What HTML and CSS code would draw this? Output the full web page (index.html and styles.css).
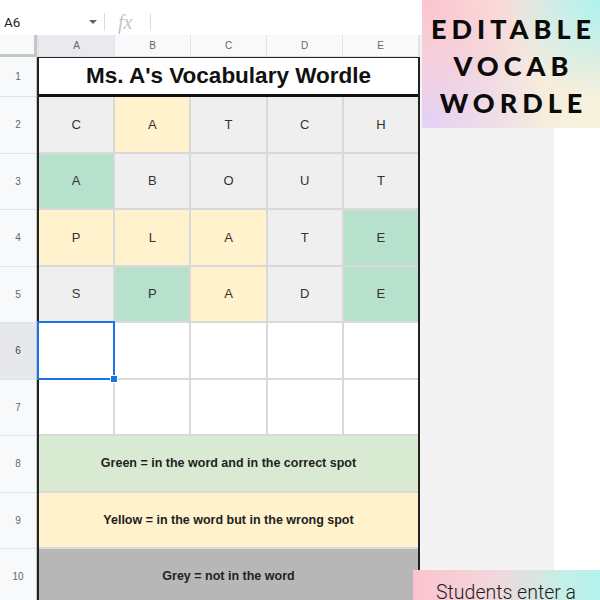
FILE: index.html
```html
<!DOCTYPE html>
<html>
<head>
<meta charset="utf-8">
<link rel="stylesheet" href="styles.css">
</head>
<body>
<div class="page">
  <div class="topbar">
    <div class="namebox"><span class="ref">A6</span><span class="caret"></span></div>
    <div class="sep"></div>
    <div class="fx">fx</div>
    <div class="sep"></div>
  </div>
  <div class="main">
    <div class="sheet">
      <div class="colheads">
        <div class="corner"></div>
        <div class="letters">
          <div class="ch sel">A</div>
          <div class="ch">B</div>
          <div class="ch">C</div>
          <div class="ch">D</div>
          <div class="ch">E</div>
        </div>
      </div>
      <div class="body">
        <div class="rowheads">
          <div class="rh first">1</div>
          <div class="rh">2</div>
          <div class="rh">3</div>
          <div class="rh">4</div>
          <div class="rh">5</div>
          <div class="rh sel">6</div>
          <div class="rh">7</div>
          <div class="rh">8</div>
          <div class="rh">9</div>
          <div class="rh">10</div>
        </div>
        <div class="data">
          <div class="title">Ms. A's Vocabulary Wordle</div>
          <div class="grid">
            <div class="cell g">C</div><div class="cell y">A</div><div class="cell g">T</div><div class="cell g">C</div><div class="cell g">H</div>
            <div class="cell k">A</div><div class="cell g">B</div><div class="cell g">O</div><div class="cell g">U</div><div class="cell g">T</div>
            <div class="cell y">P</div><div class="cell y">L</div><div class="cell y">A</div><div class="cell g">T</div><div class="cell k">E</div>
            <div class="cell g">S</div><div class="cell k">P</div><div class="cell y">A</div><div class="cell g">D</div><div class="cell k">E</div>
            <div class="cell w active"><span class="handle"></span></div><div class="cell w"></div><div class="cell w"></div><div class="cell w"></div><div class="cell w"></div>
            <div class="cell w"></div><div class="cell w"></div><div class="cell w"></div><div class="cell w"></div><div class="cell w"></div>
            <div class="legend lg">Green = in the word and in the correct spot</div>
            <div class="legend ly">Yellow = in the word but in the wrong spot</div>
            <div class="legend lk">Grey = not in the word</div>
          </div>
        </div>
      </div>
    </div>
    <div class="side"></div>
    <div class="blank"></div>
  </div>
  <div class="promo">EDITABLE<br>VOCAB<br>WORDLE</div>
  <div class="promo2">Students enter a</div>
</div>
</body>
</html>
```

FILE: styles.css
```css
html, body {
  margin: 0;
  padding: 0;
  background: #ffffff;
}
.page {
  position: relative;
  width: 600px;
  height: 600px;
  overflow: hidden;
  font-family: "Liberation Sans", Arial, sans-serif;
  color: #222;
}
.topbar {
  height: 35px;
  box-sizing: border-box;
  padding-top: 9px;
  display: flex;
  align-items: center;
  background: #fff;
}
.namebox {
  width: 104px;
  display: flex;
  align-items: center;
  justify-content: space-between;
  box-sizing: border-box;
  padding: 0 7px 0 4px;
}
.ref {
  font-family: Roboto, "Liberation Sans", sans-serif;
  font-size: 13.5px;
  color: #222;
}
.caret {
  width: 0;
  height: 0;
  border-left: 4px solid transparent;
  border-right: 4px solid transparent;
  border-top: 4px solid #5f6368;
}
.sep {
  width: 1px;
  height: 18px;
  background: #dadce0;
}
.fx {
  width: 45px;
  box-sizing: border-box;
  padding-left: 13px;
  font-family: "Liberation Serif", serif;
  font-style: italic;
  font-size: 20px;
  color: #c4c4c4;
  line-height: 18px;
}
.main {
  display: flex;
  height: 565px;
}
.sheet {
  width: 420px;
  flex: none;
  background: #fff;
}
.side {
  width: 134px;
  background: #f3f3f3;
  flex: none;
}
.blank {
  flex: 1;
  background: #fff;
}
.colheads {
  display: flex;
  height: 22px;
}
.corner {
  width: 37px;
  height: 22px;
  box-sizing: border-box;
  background: #f8f9fa;
  border-right: 3px solid #c4c7c5;
  border-bottom: 3px solid #c4c7c5;
  flex: none;
}
.letters {
  flex: 1;
  display: grid;
  grid-template-columns: repeat(5, 1fr);
  padding: 0 2px;
  column-gap: 1px;
  background: #e1e3e6;
  border-bottom: 1px solid #e1e3e6;
  box-sizing: border-box;
}
.ch {
  background: #f8f9fa;
  font-size: 10px;
  color: #666;
  display: flex;
  align-items: center;
  justify-content: center;
}
.ch.sel {
  background: #e8eaed;
}
.body {
  display: flex;
}
.rowheads {
  width: 37px;
  flex: none;
  background: #f8f9fa;
  box-sizing: border-box;
  border-right: 1px solid #c7c7c7;
}
.rh {
  height: 56.5px;
  box-sizing: border-box;
  border-bottom: 1px solid #e1e3e6;
  display: flex;
  align-items: center;
  justify-content: center;
  font-size: 10px;
  color: #666;
}
.rh.first {
  height: 40px;
}
.rh.sel {
  background: #e6e8eb;
  color: #444;
}
.data {
  flex: 1;
  box-sizing: border-box;
  border-left: 2px solid #222;
  border-right: 2px solid #222;
}
.title {
  height: 40px;
  box-sizing: border-box;
  border-top: 1px solid #222;
  border-bottom: 3px solid #111;
  display: flex;
  align-items: center;
  justify-content: center;
  font-weight: bold;
  font-size: 22.5px;
  color: #111;
  background: #fff;
}
.grid {
  display: grid;
  grid-template-columns: repeat(5, 1fr);
  grid-auto-rows: 54.5px;
  gap: 2px;
  background: #d9d9d9;
}
.cell {
  display: flex;
  align-items: center;
  justify-content: center;
  font-size: 13px;
  color: #333;
  position: relative;
}
.cell.g { background: #efefef; }
.cell.y { background: #fff2cc; }
.cell.k { background: #b7e1cd; }
.cell.w { background: #ffffff; }
.cell.active {
  outline: 2px solid #1a73e8;
  outline-offset: 0px;
  z-index: 1;
}
.handle {
  position: absolute;
  right: -5px;
  bottom: -5px;
  width: 6px;
  height: 6px;
  background: #1a73e8;
  border: 1px solid #fff;
}
.legend {
  grid-column: 1 / span 5;
  display: flex;
  align-items: center;
  justify-content: center;
  font-weight: bold;
  font-size: 12.5px;
  color: #222;
}
.legend.lg { background: #d9ead3; }
.legend.ly { background: #fff2cc; }
.legend.lk { background: #b7b7b7; }
.promo {
  position: absolute;
  left: 422px;
  top: 0;
  width: 178px;
  height: 128px;
  box-sizing: border-box;
  padding-top: 10px;
  padding-left: 5px;
  text-align: center;
  font-family: Lato, "Open Sans", sans-serif;
  font-weight: 900;
  font-size: 27px;
  line-height: 37px;
  letter-spacing: 5px;
  color: #0b0b0b;
  background:
    radial-gradient(circle at 100% 0%, rgba(170, 243, 240, 0.95) 0, rgba(170, 243, 240, 0) 45%),
    radial-gradient(circle at 0% 0%, rgba(252, 196, 206, 1) 0, rgba(252, 196, 206, 0) 55%),
    radial-gradient(circle at 0% 90%, rgba(228, 208, 245, 1) 0, rgba(228, 208, 245, 0) 60%),
    radial-gradient(circle at 100% 100%, rgba(246, 244, 220, 1) 0, rgba(246, 244, 220, 0) 60%),
    #f8e6dc;
}
.promo2 {
  position: absolute;
  left: 413px;
  top: 570px;
  width: 187px;
  height: 40px;
  box-sizing: border-box;
  padding-top: 11px;
  padding-left: 23px;
  font-family: Roboto, "Liberation Sans", sans-serif;
  font-weight: 300;
  font-size: 19.5px;
  line-height: 24px;
  color: #1d1d1d;
  white-space: nowrap;
  background: linear-gradient(90deg, #fcc3cf 0%, #f1d8dc 45%, #c4efe6 80%, #b4f3ee 100%);
}
```
